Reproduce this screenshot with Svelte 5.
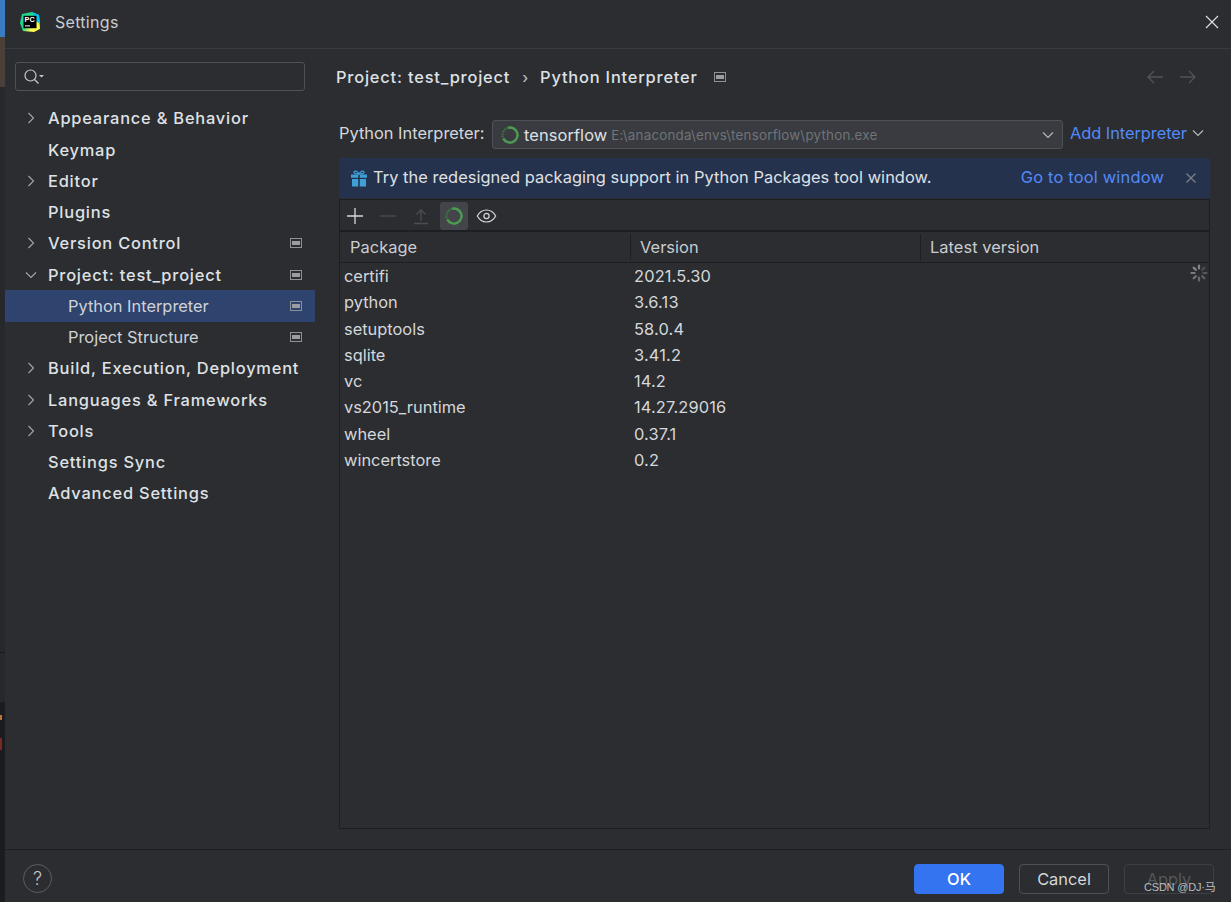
<script lang="ts">
	type Node = { label: string; arrow?: 'right' | 'down'; child?: boolean; selected?: boolean; scoped?: boolean };

	const tree: Node[] = [
		{ label: 'Appearance & Behavior', arrow: 'right' },
		{ label: 'Keymap' },
		{ label: 'Editor', arrow: 'right' },
		{ label: 'Plugins' },
		{ label: 'Version Control', arrow: 'right', scoped: true },
		{ label: 'Project: test_project', arrow: 'down', scoped: true },
		{ label: 'Python Interpreter', child: true, selected: true, scoped: true },
		{ label: 'Project Structure', child: true, scoped: true },
		{ label: 'Build, Execution, Deployment', arrow: 'right' },
		{ label: 'Languages & Frameworks', arrow: 'right' },
		{ label: 'Tools', arrow: 'right' },
		{ label: 'Settings Sync' },
		{ label: 'Advanced Settings' }
	];

	const packages = [
		['certifi', '2021.5.30'],
		['python', '3.6.13'],
		['setuptools', '58.0.4'],
		['sqlite', '3.41.2'],
		['vc', '14.2'],
		['vs2015_runtime', '14.27.29016'],
		['wheel', '0.37.1'],
		['wincertstore', '0.2']
	];
</script>

{#snippet scope()}
	<svg class="scope" width="12" height="10" viewBox="0 0 12 10">
		<rect x="0.5" y="0.5" width="11" height="9" fill="none" stroke="#8c9095" />
		<rect x="2" y="3" width="8" height="4" fill="#9a9ea3" />
	</svg>
{/snippet}

{#snippet loader(size)}
	<svg width={size} height={size} viewBox="0 0 18 18" fill="none">
		<circle cx="9" cy="9" r="7.5" stroke="#3f7d45" stroke-width="2.2" stroke-dasharray="1.3 1.1" />
		<path d="M7 1.800A7.500 7.500 0 1 1 2.400 12.600" stroke="#4f9a53" stroke-width="2.3" />
	</svg>
{/snippet}

<div class="screen">
	<div class="backdrop">
		<div class="bd-blue"></div>
		<div class="bd-brown"></div>
		<div class="bd-dark"></div>
		<div class="bd-mid"></div>
		<div class="bd-black">
			<i class="mark orange"></i>
			<i class="mark red"></i>
		</div>
	</div>

	<div class="dialog">
		<header class="titlebar">
			<svg class="logo" width="20" height="20" viewBox="0 0 20 20">
				<defs>
					<linearGradient id="pc-grad" x1="0" y1="0" x2="1" y2="1">
						<stop offset="0" stop-color="#21d789" />
						<stop offset="0.5" stop-color="#21d789" />
						<stop offset="0.72" stop-color="#fcf84a" />
						<stop offset="0.88" stop-color="#fcf84a" />
						<stop offset="1" stop-color="#07c3f2" />
					</linearGradient>
				</defs>
				<path d="M2 2 12 0l7 3 1 14-6 3-11-1-3-8z" fill="url(#pc-grad)" />
				<path d="M12 0l7 3 1 9-4-3z" fill="#07c3f2" />
				<rect x="3.500" y="3.800" width="13" height="12.400" fill="#000" />
				<text x="4.600" y="10.400" class="logo-text">PC</text>
				<rect x="5" y="13.400" width="5" height="1" fill="#fff" />
			</svg>
			<span class="title">Settings</span>
			<svg class="close" width="14" height="14" viewBox="0 0 14 14">
				<path d="M1 1l12 12M13 1 1 13" stroke="#e0e2e6" stroke-width="1.100" />
			</svg>
		</header>

		<div class="body">
			<aside class="sidebar">
				<div class="search">
					<svg width="24" height="18" viewBox="0 0 24 18" fill="none">
						<circle cx="7.500" cy="7.500" r="5.500" stroke="#c4c7cc" stroke-width="1.200" />
						<path d="M11.500 11.500l4 4" stroke="#c4c7cc" stroke-width="1.300" />
						<path d="M16 7h5l-2.500 2.600z" fill="#c4c7cc" />
					</svg>
				</div>
				<nav class="tree">
					{#each tree as node}
						<div class="node" class:selected={node.selected} class:child={node.child}>
							<span class="arrow">
								{#if node.arrow === 'right'}
									<svg width="10" height="12" viewBox="0 0 10 12" fill="none"><path d="M2.500 1l5 5-5 5" stroke="#a4a7ac" stroke-width="1.100" /></svg>
								{:else if node.arrow === 'down'}
									<svg width="12" height="10" viewBox="0 0 12 10" fill="none"><path d="M1 2.500l5 5 5-5" stroke="#a4a7ac" stroke-width="1.100" /></svg>
								{/if}
							</span>
							<span class="node-label">{node.label}</span>
							{#if node.scoped}{@render scope()}{/if}
						</div>
					{/each}
				</nav>
			</aside>

			<main class="content">
				<div class="crumbs">
					<span>Project: test_project</span>
					<span class="crumb-sep">›</span>
					<span>Python Interpreter</span>
					{@render scope()}
					<div class="history">
						<svg width="18" height="14" viewBox="0 0 18 14" fill="none"><path d="M17 7H2M8 1 2 7l6 6" stroke="#515358" stroke-width="1.300" /></svg>
						<svg width="18" height="14" viewBox="0 0 18 14" fill="none"><path d="M1 7h15M10 1l6 6-6 6" stroke="#515358" stroke-width="1.300" /></svg>
					</div>
				</div>

				<div class="interp-row">
					<span class="interp-label">Python Interpreter:</span>
					<div class="combo">
						{@render loader(18)}
						<span class="env">tensorflow</span>
						<span class="env-path">E:\anaconda\envs\tensorflow\python.exe</span>
						<svg class="combo-caret" width="12" height="8" viewBox="0 0 12 8" fill="none"><path d="M1 1.500l5 5 5-5" stroke="#b4b7bc" stroke-width="1.200" /></svg>
					</div>
					<span class="add-link">Add Interpreter</span>
					<svg class="add-caret" width="12" height="8" viewBox="0 0 12 8" fill="none"><path d="M1 1.500l5 5 5-5" stroke="#b4b7bc" stroke-width="1.200" /></svg>
				</div>

				<div class="banner">
					<svg width="16" height="17" viewBox="0 0 16 17">
						<path d="M8 4C6 .5 3 .5 3 2.300 3 4 6 4 8 4c2 0 5 0 5-1.700C13 .5 10 .5 8 4z" fill="none" stroke="#3fa0d8" stroke-width="1.300" />
						<path d="M0 4.500h7.200v3.300H0zM8.800 4.500H16v3.300H8.800zM1 9h6.200v7.500H1zM8.800 9H15v7.500H8.800z" fill="#3fa0d8" />
					</svg>
					<span class="banner-text">Try the redesigned packaging support in Python Packages tool window.</span>
					<span class="banner-link">Go to tool window</span>
					<svg class="banner-close" width="10" height="10" viewBox="0 0 10 10"><path d="M.5.5l9 9M9.500.5l-9 9" stroke="#7d8189" stroke-width="1.200" /></svg>
				</div>

				<section class="panel">
					<div class="toolbar">
						<span class="tool">
							<svg width="18" height="18" viewBox="0 0 18 18"><path d="M9 1v16M1 9h16" stroke="#d5d7db" stroke-width="1.300" /></svg>
						</span>
						<span class="tool">
							<svg width="18" height="18" viewBox="0 0 18 18"><path d="M1 9h16" stroke="#4c4e53" stroke-width="1.300" /></svg>
						</span>
						<span class="tool">
							<svg width="16" height="18" viewBox="0 0 16 18" fill="none"><path d="M8 14V3M3.500 7.500 8 3l4.500 4.500M1 16.500h14" stroke="#4c4e53" stroke-width="1.300" /></svg>
						</span>
						<span class="tool active">{@render loader(18)}</span>
						<span class="tool eye">
							<svg width="21" height="14" viewBox="0 0 20 14" fill="none"><path d="M.8 7C3 3 6.200 1 10 1s7 2 9.200 6C17 11 13.800 13 10 13S3 11 .8 7z" stroke="#d5d7db" stroke-width="1.200" /><circle cx="10" cy="7" r="2.600" stroke="#d5d7db" stroke-width="1.200" /></svg>
						</span>
					</div>

					<div class="thead">
						<div>Package</div>
						<div>Version</div>
						<div>Latest version</div>
					</div>

					<div class="rows">
						{#each packages as [name, version]}
							<div class="row">
								<span>{name}</span>
								<span class="version">{version}</span>
							</div>
						{/each}
						<svg class="spinner" width="18" height="18" viewBox="0 0 18 18" stroke="#8a8d92" stroke-width="2.200" stroke-linecap="round">
							<path d="M9 1.500v3" opacity="0.9" />
							<path d="M14.300 3.700l-2.100 2.100" opacity="0.35" />
							<path d="M16.500 9h-3" opacity="0.45" />
							<path d="M14.300 14.300l-2.100-2.100" opacity="0.55" />
							<path d="M9 16.500v-3" opacity="0.65" />
							<path d="M3.700 14.300l2.100-2.100" opacity="0.75" />
							<path d="M1.500 9h3" opacity="0.85" />
							<path d="M3.700 3.700l2.100 2.100" opacity="0.95" />
						</svg>
					</div>
				</section>
			</main>
		</div>

		<footer class="footer">
			<span class="help">?</span>
			<div class="buttons">
				<span class="btn primary">OK</span>
				<span class="btn">Cancel</span>
				<span class="btn disabled">Apply</span>
			</div>
		</footer>
	</div>

	<span class="watermark">CSDN @DJ·马</span>
</div>

<style>
	:global(body) {
		background: #2b2d30;
	}

	.screen {
		position: relative;
		display: flex;
		width: 1231px;
		height: 902px;
		overflow: hidden;
		font-family: Inter, 'Noto Sans CJK SC', sans-serif;
		font-size: 16.4px;
		color: #dfe1e5;
	}

	.backdrop {
		display: flex;
		flex-direction: column;
		width: 5px;
		flex-shrink: 0;
	}
	.bd-blue {
		height: 37px;
		background: #3a7bc4;
	}
	.bd-brown {
		height: 50px;
		background: #4b4039;
	}
	.bd-dark {
		height: 565px;
		background: #26282b;
	}
	.bd-mid {
		height: 50px;
		background: #26282b;
		border-top: 1px solid #17181a;
		box-sizing: border-box;
	}
	.bd-black {
		position: relative;
		flex: 1;
		background: #1b1c1f;
	}
	.mark {
		position: absolute;
		left: 0;
		width: 2px;
	}
	.mark.orange {
		top: 13px;
		height: 5px;
		background: #b5763a;
	}
	.mark.red {
		top: 36px;
		height: 12px;
		background: #7a2a26;
	}

	.dialog {
		flex: 1;
		display: flex;
		flex-direction: column;
		min-width: 0;
		background: #2b2d30;
	}

	.titlebar {
		display: flex;
		align-items: center;
		height: 44px;
		padding: 0 12px 4px 15px;
		border-bottom: 1px solid #393b40;
	}
	.logo {
		flex-shrink: 0;
	}
	.logo-text {
		font-family: 'Liberation Sans', sans-serif;
		font-size: 7.2px;
		font-weight: 700;
		fill: #fff;
	}
	.title {
		margin-left: 15px;
		color: #c9ccd1;
		font-size: 16px;
		letter-spacing: 0.3px;
	}
	.close {
		margin-left: auto;
	}

	.body {
		flex: 1;
		display: flex;
		min-height: 0;
	}

	.sidebar {
		width: 310px;
		flex-shrink: 0;
		padding-top: 13px;
		box-sizing: border-box;
	}
	.search {
		display: flex;
		align-items: center;
		height: 29px;
		margin: 0 10px;
		padding-left: 7px;
		box-sizing: border-box;
		border: 1px solid #4e5157;
		border-radius: 3px;
	}
	.tree {
		margin-top: 11.8px;
	}
	.node {
		display: flex;
		align-items: center;
		height: 31.25px;
		padding-right: 13px;
		font-weight: 500;
		letter-spacing: 0.8px;
	}
	.node.child {
		font-weight: 400;
		letter-spacing: 0;
		color: #d0d3d8;
	}
	.node.selected {
		background: #2e436e;
	}
	.arrow {
		display: flex;
		justify-content: center;
		width: 20px;
		margin-left: 16px;
		margin-right: 7px;
		flex-shrink: 0;
	}
	.node.child .arrow {
		margin-right: 27px;
	}
	.node-label {
		flex: 1;
		white-space: nowrap;
	}

	.content {
		flex: 1;
		min-width: 0;
		padding: 0 21px 20px 24px;
		display: flex;
		flex-direction: column;
	}

	.crumbs {
		display: flex;
		align-items: center;
		height: 56px;
		margin-bottom: 2px;
		margin-left: -3px;
		font-weight: 500;
		letter-spacing: 0.82px;
		white-space: nowrap;
	}
	.crumb-sep {
		margin: 0 11px 0 12px;
		font-size: 15px;
		color: #b4b7bc;
	}
	.crumbs .scope {
		margin-left: 16px;
	}
	.history {
		display: flex;
		gap: 15px;
		margin-left: auto;
		margin-right: 13px;
	}

	.interp-row {
		display: flex;
		align-items: center;
		height: 29px;
		margin-top: 13px;
		white-space: nowrap;
	}
	.interp-label {
		width: 153px;
		flex-shrink: 0;
		padding-bottom: 3px;
		color: #d5d7db;
	}
	.combo {
		display: flex;
		align-items: center;
		width: 571px;
		height: 29px;
		flex-shrink: 0;
		box-sizing: border-box;
		padding: 0 8px 0 8px;
		background: #393b40;
		border: 1px solid #4e5157;
		border-radius: 3px;
	}
	.env {
		margin-left: 5px;
		letter-spacing: 0.1px;
	}
	.env-path {
		margin-left: 4px;
		font-size: 13.4px;
		color: #6f737a;
		letter-spacing: 0.2px;
	}
	.combo-caret {
		margin-left: auto;
	}
	.add-link {
		margin-left: 7px;
		margin-right: 5px;
		padding-bottom: 3px;
		color: #548af7;
		letter-spacing: -0.05px;
	}
	.add-caret {
		margin-bottom: 3px;
	}

	.banner {
		display: flex;
		align-items: center;
		height: 40px;
		margin-top: 9px;
		padding: 0 14px 0 12px;
		background: #25324d;
		white-space: nowrap;
	}
	.banner-text {
		margin-left: 6px;
		padding-bottom: 2px;
		letter-spacing: 0.05px;
	}
	.banner-link {
		margin-left: auto;
		padding-bottom: 2px;
		color: #548af7;
		letter-spacing: 0.2px;
	}
	.banner-close {
		margin-left: 22px;
	}

	.panel {
		flex: 1;
		display: flex;
		flex-direction: column;
		margin-top: 1px;
		border: 1px solid #1e1f22;
		min-height: 0;
	}
	.toolbar {
		display: flex;
		align-items: center;
		height: 32px;
		padding: 1px 0 0 1px;
		border-bottom: 2px solid #1e1f22;
		box-sizing: border-box;
		gap: 5px;
	}
	.tool {
		display: flex;
		align-items: center;
		justify-content: center;
		width: 28px;
		height: 28px;
		border-radius: 3px;
	}
	.tool.active {
		background: #43454a;
	}
	.tool.eye {
		margin-left: -1px;
	}

	.thead {
		display: grid;
		grid-template-columns: 290px 290px 1fr;
		height: 31px;
		box-sizing: border-box;
		border-bottom: 1px solid #1e1f22;
		align-items: center;
		color: #c9ccd1;
		letter-spacing: 0.05px;
	}
	.thead div {
		padding-left: 9px;
		height: 26px;
		line-height: 26px;
		border-left: 1px solid #1e1f22;
	}
	.thead div:first-child {
		padding-left: 10px;
		border-left: none;
	}

	.rows {
		position: relative;
		flex: 1;
	}
	.row {
		display: grid;
		grid-template-columns: 290px 1fr;
		height: 26.25px;
		line-height: 26.25px;
		color: #d5d7db;
	}
	.row span {
		padding-left: 4px;
	}
	.row .version {
		letter-spacing: 0.15px;
	}
	.spinner {
		position: absolute;
		top: 1px;
		right: 1px;
	}

	.footer {
		display: flex;
		align-items: center;
		justify-content: space-between;
		height: 53px;
		flex-shrink: 0;
		padding: 5px 17px 0 18px;
		box-sizing: border-box;
		border-top: 1px solid #1e1f22;
	}
	.help {
		display: flex;
		align-items: center;
		justify-content: center;
		width: 29px;
		height: 29px;
		box-sizing: border-box;
		border: 1px solid #5a5d63;
		border-radius: 50%;
		font-size: 18px;
		font-weight: 300;
		color: #c4c7cc;
	}
	.buttons {
		display: flex;
		gap: 15px;
	}
	.btn {
		display: flex;
		align-items: center;
		justify-content: center;
		width: 90px;
		height: 30px;
		box-sizing: border-box;
		border: 1px solid #4e5157;
		border-radius: 4px;
		color: #d5d7db;
	}
	.btn.primary {
		background: #3574f0;
		border-color: #3574f0;
		color: #fff;
		font-weight: 500;
	}
	.btn.disabled {
		color: #55575c;
		border-color: #3d3f44;
	}

	.watermark {
		position: absolute;
		left: 1144px;
		top: 877.5px;
		font-family: 'Liberation Sans', 'Noto Sans CJK SC', sans-serif;
		font-size: 11px;
		letter-spacing: -0.2px;
		color: #b9bbbf;
		white-space: nowrap;
	}
</style>
